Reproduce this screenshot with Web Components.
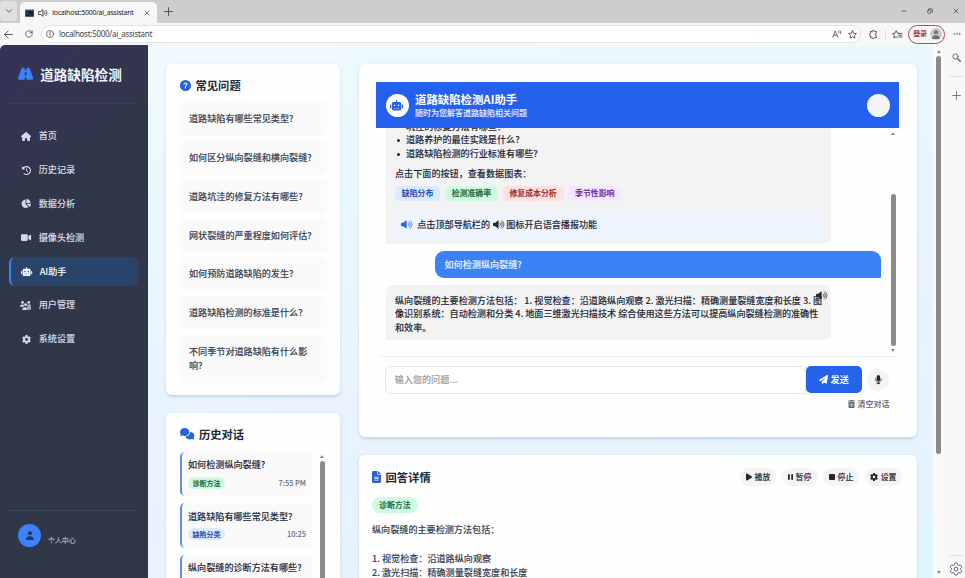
<!DOCTYPE html>
<html lang="zh-CN">
<head>
<meta charset="utf-8">
<title>道路缺陷检测AI助手</title>
<style>
html,body{margin:0;height:100%;overflow:hidden}
body{font:9.1px/13.7px "Noto Sans CJK SC","Noto Sans",sans-serif;font-weight:500;color:#2c313b;background:#f7f7f7;-webkit-text-stroke:.08px}
</style>
</head>
<body>
<app-window></app-window>
<script>
const GEAR='M495.9 166.6c3.2 8.7 .5 18.4-6.4 24.6l-43.3 39.4c1.1 8.3 1.7 16.8 1.7 25.4s-.6 17.1-1.7 25.4l43.3 39.4c6.9 6.2 9.6 15.9 6.4 24.6c-4.4 11.9-9.7 23.3-15.8 34.3l-4.7 8.1c-6.6 11-14 21.4-22.1 31.2c-5.9 7.2-15.7 9.6-24.5 6.8l-55.7-17.7c-13.4 10.3-28.2 18.9-44 25.4l-12.5 57.1c-2 9.1-9 16.3-18.2 17.8c-13.8 2.3-28 3.5-42.5 3.5s-28.7-1.2-42.5-3.5c-9.2-1.5-16.2-8.7-18.2-17.8l-12.5-57.1c-15.8-6.5-30.6-15.1-44-25.4L83.1 425.9c-8.8 2.8-18.6 .3-24.5-6.8c-8.1-9.8-15.5-20.2-22.1-31.2l-4.7-8.1c-6.1-11-11.4-22.4-15.8-34.3c-3.2-8.7-.5-18.4 6.4-24.6l43.3-39.4C64.6 273.1 64 264.6 64 256s.6-17.1 1.7-25.4L22.4 191.2c-6.9-6.2-9.6-15.9-6.4-24.6c4.4-11.9 9.7-23.3 15.8-34.3l4.7-8.1c6.6-11 14-21.4 22.1-31.2c5.9-7.2 15.7-9.6 24.5-6.8l55.7 17.7c13.4-10.3 28.2-18.9 44-25.4l12.5-57.1c2-9.1 9-16.3 18.2-17.8C227.3 1.2 241.5 0 256 0s28.7 1.2 42.5 3.5c9.2 1.5 16.2 8.7 18.2 17.8l12.5 57.1c15.8 6.5 30.6 15.1 44 25.4l55.7-17.7c8.8-2.8 18.6-.3 24.5 6.8c8.1 9.8 15.5 20.2 22.1 31.2l4.7 8.1c6.1 11 11.4 22.4 15.8 34.3zM256 336a80 80 0 1 0 0-160 80 80 0 1 0 0 160z';
/* name: [viewBox width, viewBox height, markup] */
const ICONS={
 road:[576,512,'<path d="M256 32H181.2c-27.1 0-51.3 17.1-60.3 42.6L3.1 407.2C1.1 413 0 419.2 0 425.4C0 455.5 24.5 480 54.6 480H256V416c0-17.7 14.3-32 32-32s32 14.3 32 32v64H521.4c30.2 0 54.6-24.5 54.6-54.6c0-6.2-1.1-12.4-3.1-18.2L455.1 74.6C446 49.1 421.9 32 394.8 32H320V96c0 17.7-14.3 32-32 32s-32-14.3-32-32V32zm64 192v64c0 17.7-14.3 32-32 32s-32-14.3-32-32V224c0-17.7 14.3-32 32-32s32 14.3 32 32z"/>'],
 house:[576,512,'<path d="M575.8 255.5c0 18-15 32.1-32 32.1h-32l.7 160.2c0 2.7-.2 5.4-.5 8.1V472c0 22.1-17.9 40-40 40H456c-1.1 0-2.2 0-3.3-.1c-1.4 .1-2.8 .1-4.2 .1H416 392c-22.1 0-40-17.9-40-40V448 384c0-17.7-14.3-32-32-32H256c-17.7 0-32 14.3-32 32v64 24c0 22.1-17.9 40-40 40H160 128.1c-1.5 0-3-.1-4.5-.2c-1.2 .1-2.4 .2-3.6 .2H104c-22.1 0-40-17.9-40-40V360c0-.9 0-1.9 .1-2.8V287.6H32c-18 0-32-14-32-32.1c0-9 3-17 10-24L266.4 8c7-7 15-8 22-8s15 2 21 7L564.8 231.5c8 7 12 15 11 24z"/>'],
 history:[512,512,'<path d="M75 75L41 41C25.9 25.9 0 36.6 0 57.9V168c0 13.3 10.7 24 24 24H134.1c21.4 0 32.1-25.9 17-41l-30.8-30.8C155 85.5 203 64 256 64c106 0 192 86 192 192s-86 192-192 192c-40.8 0-78.6-12.7-109.7-34.4c-14.5-10.1-34.4-6.6-44.6 7.9s-6.6 34.4 7.9 44.6C151.2 495 201.7 512 256 512c141.4 0 256-114.6 256-256S397.4 0 256 0C185.3 0 121.3 28.7 75 75zm181 53c-13.3 0-24 10.7-24 24V256c0 6.4 2.5 12.5 7 17l72 72c9.4 9.4 24.6 9.4 33.9 0s9.4-24.6 0-33.9l-65-65V152c0-13.3-10.7-24-24-24z"/>'],
 pie:[576,512,'<path d="M304 240V16.6c0-9 7-16.6 16-16.6C443.7 0 544 100.3 544 224c0 9-7.6 16-16.6 16H304zM32 272C32 150.7 122.1 50.3 239 34.3c9.2-1.3 17 6.1 17 15.4V288L412.5 444.5c6.7 6.7 6.2 17.7-1.5 23.1C371.8 495.6 323.8 512 272 512C139.5 512 32 404.6 32 272zm526.4 16c9.3 0 16.6 7.8 15.4 17c-7.7 55.9-34.6 105.6-73.9 142.3c-6 5.6-15.4 5.2-21.2-.7L320 288H558.4z"/>'],
 video:[576,512,'<path d="M0 128C0 92.7 28.7 64 64 64H320c35.3 0 64 28.7 64 64V384c0 35.3-28.7 64-64 64H64c-35.3 0-64-28.7-64-64V128zM559.1 99.8c10.4 5.6 16.9 16.4 16.9 28.2V384c0 11.8-6.5 22.6-16.9 28.2s-23 5-32.9-1.6l-96-64L416 337.1V320 192 174.9l14.2-9.5 96-64c9.8-6.5 22.4-7.2 32.9-1.6z"/>'],
 robot:[640,512,'<path fill-rule="evenodd" d="M320 0c17.7 0 32 14.3 32 32V96H472c39.8 0 72 32.2 72 72V440c0 39.8-32.2 72-72 72H168c-39.8 0-72-32.2-72-72V168c0-39.8 32.2-72 72-72H288V32c0-17.7 14.3-32 32-32zM208 384c-8.8 0-16 7.2-16 16s7.2 16 16 16h32c8.8 0 16-7.2 16-16s-7.2-16-16-16H208zm96 0c-8.8 0-16 7.2-16 16s7.2 16 16 16h32c8.8 0 16-7.2 16-16s-7.2-16-16-16H304zm96 0c-8.8 0-16 7.2-16 16s7.2 16 16 16h32c8.8 0 16-7.2 16-16s-7.2-16-16-16H400zM264 256a40 40 0 1 0 -80 0 40 40 0 1 0 80 0zm152 40a40 40 0 1 0 0-80 40 40 0 1 0 0 80zM48 224H64V416H48c-26.5 0-48-21.5-48-48V272c0-26.5 21.5-48 48-48zm544 0c26.5 0 48 21.5 48 48v96c0 26.5-21.5 48-48 48H576V224h16z"/>'],
 users:[640,512,'<circle cx="144" cy="80" r="78"/><circle cx="500" cy="80" r="78"/><circle cx="320" cy="216" r="84"/><path d="M0 299c0-59 48-107 107-107h42c20 0 38 4 55 12a136 136 0 0 0 45 116H21c-12 0-21-10-21-21zM436 204c17-8 36-12 55-12h42c59 0 107 48 107 99l-60-22-90 0-50 30-12-20c10-24 15-50 8-75zM128 485c0-74 60-133 133-133h100l20 90 40 70H155c-15 0-27-12-27-27z"/><g transform="translate(392 274) scale(.48)"><path fill-rule="evenodd" d="'+GEAR+'"/></g>'],
 gear:[512,512,'<path fill-rule="evenodd" d="'+GEAR+'"/>'],
 user:[448,512,'<circle cx="224" cy="128" r="118"/><path d="M8 482c0-98 80-178 178-178h76c98 0 178 80 178 178 0 16-14 30-30 30H38c-16 0-30-14-30-30z"/>'],
 question:[512,512,'<circle cx="256" cy="256" r="256"/><path d="M185 190c5-35 30-53 73-53 42 0 69 22 69 56 0 46-71 47-71 93" fill="none" stroke="#fff" stroke-width="48" stroke-linecap="round"/><circle cx="256" cy="360" r="32" fill="#fff"/>'],
 comments:[640,512,'<path d="M208 352c115 0 208-79 208-176S323 0 208 0 0 79 0 176c0 38 14 74 39 103-4 15-14 33-30 50-8 9-11 23 1 23 46 0 80-16 105-31 28 20 60 31 93 31z"/><path d="M448 176c0 113-99 199-217 207 24 75 104 129 201 129 34 0 66-7 93-19 25 14 59 19 105 19 12 0 12-14 1-23-16-17-26-35-30-50 25-28 39-65 39-103 0-87-85-159-192-160z"/>'],
 file:[384,512,'<path fill-rule="evenodd" d="M64 0C29 0 0 29 0 64V448c0 35 29 64 64 64H320c35 0 64-29 64-64V160H256c-18 0-32-14-32-32V0zM256 0V128H384zM112 240H272c21 0 21 32 0 32H112c-21 0-21-32 0-32zM112 304H272c21 0 21 32 0 32H112c-21 0-21-32 0-32zM112 368H272c21 0 21 32 0 32H112c-21 0-21-32 0-32z"/>'],
 volume:[640,512,'<path d="M302 35c11 5 18 16 18 29V448c0 13-7 24-18 29s-25 3-35-5L132 352H64c-35 0-64-29-64-64V224c0-35 29-64 64-64h68L267 40c10-8 23-10 35-5z"/><path d="M400 186c41 32 41 108 0 140M460 112c87 70 87 218 0 288M520 37c134 108 134 330 0 438" fill="none" stroke="currentColor" stroke-width="44" stroke-linecap="round"/>'],
 plane:[512,512,'<path d="M498 6c11 7 16 19 14 32l-64 416c-2 20-23 32-44 25L284 430l-68 74c-18 18-56 8-56-22v-84c0-4 2-8 4-11L332 203c10-15-7-27-20-17L106 361 17 317C-4 307-5 278 15 265L463 5c11-7 24-6 35 1z"/>'],
 mic:[384,512,'<rect x="96" width="192" height="352" rx="96"/><path d="M40 216v40c0 84 68 152 152 152s152-68 152-152v-40M192 408v80M120 488h144" fill="none" stroke="currentColor" stroke-width="48" stroke-linecap="round"/>'],
 trash:[448,512,'<path fill-rule="evenodd" d="M135 18c6-11 17-18 29-18h120c12 0 23 7 29 18l7 14h96c43 0 43 64 0 64H32c-43 0-43-64 0-64h96zM32 128H416V448c0 35-29 64-64 64H96c-35 0-64-29-64-64zM120 200V432h28V200zM210 200V432h28V200zM300 200V432h28V200z"/>'],
 play:[384,512,'<path d="M73 39C58 30 40 30 25 38S0 63 0 80V432c0 17 9 34 25 42s33 8 48-1L361 297c14-9 23-24 23-41s-9-32-23-41z"/>'],
 pause:[320,512,'<rect y="64" width="112" height="384" rx="44"/><rect x="208" y="64" width="112" height="384" rx="44"/>'],
 stop:[384,512,'<rect y="64" width="384" height="384" rx="60"/>'],
 down:[16,16,'<path class="l" d="M2.5 5 8 10.5 13.5 5"/>'],
 close:[16,16,'<path class="l" d="M2.5 2.5l11 11m0-11l-11 11"/>'],
 plus:[16,16,'<path class="l" d="M8 1v14M1 8h14"/>'],
 back:[16,16,'<path class="l" d="M15 8H1.5M7.5 1.5 1.2 8l6.3 6.5"/>'],
 reload:[16,16,'<path class="l" d="M14 5.2A6.6 6.6 0 1 0 14.6 8M14.3 1.3v4.2h-4.2"/>'],
 info:[16,16,'<circle class="l" cx="8" cy="8" r="7"/><path class="l" d="M8 7v4.8M8 4v1.2"/>'],
 sound:[20,16,'<path class="l" d="M2 5h3.5L10 1.3v13.4L5.500 11H2zM13 5.500c1.300 1.500 1.300 3.500 0 5M15.500 2.500c3.300 3 3.300 8 0 11"/>'],
 terminal:[16,14,'<path fill="#a3a8af" d="M0 0h16v14H0z"/><path fill="#14223b" d="M.7 2.300h14.600v11H.7z"/><path d="m3 5 2.500 2L3 9M7 10h4" fill="none" stroke="#5d7aa8"/>'],
 aloud:[20,16,'<path class="l" d="M1.500 14.500 6.500 2l5 12.500M3.300 10.300h6.400M12.500 2c1.300 1 1.600 2.700 1.200 4M15.500.8c2 2 2.200 4.200 1.500 6.500"/>'],
 star:[16,16,'<path class="l" d="m8 1.200 2.100 4.500 4.900.6-3.600 3.300 1 4.900L8 12.100l-4.400 2.400 1-4.900L1 6.300l4.900-.6z"/>'],
 favs:[18,16,'<path class="l" d="M11.500 5.800 9.500 5.500 7.300 1.200 5.300 5.500.9 6.200l3.200 3.300-.8 4.800 4-2.200 2.200 1.200M11.500 6h6M11 9.200h6.500M12.500 12.300h5"/>'],
 puzzle:[16,16,'<path class="l" d="M5.500 2.700a2 2 0 0 1 4 0H13v3.300a2 2 0 0 0 0 4v3.300H9.500a2 2 0 0 1-4 0H2.700V10a2 2 0 0 1 0-4V2.700z"/>'],
 min:[16,16,'<path class="l" d="M2 8h12"/>'],
 restore:[16,16,'<rect class="l" x="1.800" y="5" width="9" height="9" rx="2"/><path class="l" d="M5.500 2h6a3 3 0 0 1 3 3v6"/>'],
 dots:[16,16,'<circle cx="2.500" cy="8" r="1.500"/><circle cx="8" cy="8" r="1.500"/><circle cx="13.500" cy="8" r="1.500"/>'],
 search:[16,16,'<circle class="l" cx="6.200" cy="6.200" r="4.800"/><path class="l" d="m9.800 9.800 5 5" style="stroke-width:2.400"/>'],
 cog:[512,512,'<path d="'+GEAR+'" fill="none" stroke="currentColor" stroke-width="38"/>'],
 up:[10,8,'<path d="M5 0l5 8H0z"/>'],
 dn:[10,8,'<path d="M5 8l5-8H0z"/>']
};
function define(name,css,html){
  const t=document.createElement('template');
  customElements.define(name,class extends HTMLElement{
    constructor(){
      super();
      t.innerHTML='<style>*{box-sizing:border-box}'+css+'</style>'+(typeof html==='function'?html(this):html);
      this.attachShadow({mode:'open'}).append(t.content.cloneNode(true));
    }
  });
}
define('x-icon',':host{display:inline-flex;flex:none}svg{display:block;fill:currentColor;overflow:visible}.l{fill:none;stroke:currentColor;stroke-width:var(--sw,1.5);stroke-linecap:round;stroke-linejoin:round}',
 el=>{const [w,h,m]=ICONS[el.getAttribute('name')],s=+el.getAttribute('size')||9;
  return `<svg viewBox="0 0 ${w} ${h}" width="${(s*w/h).toFixed(2)}" height="${s}">${m}</svg>`});

define('scroll-bar',`:host{display:flex;flex-direction:column;align-items:center;width:6px;color:#858585}
 i{display:block;width:var(--w,5px);border-radius:3px;background:#8a8a8a}`,
 el=>`<x-icon name="up" size="3"></x-icon><i style="margin-top:${el.getAttribute('gap')}px;height:${el.getAttribute('thumb')}px"></i>${el.hasAttribute('end')?`<x-icon name="dn" size="3" style="margin-top:${el.getAttribute('end')}px"></x-icon>`:''}`);

define('browser-chrome',`:host{display:block;height:45px;color:#444;-webkit-text-stroke:0}
 .tabs{height:23px;background:#cdcdcd;display:flex;align-items:flex-end}
 .drop{width:17px;height:20px;margin:0 3px 1px 0;background:#e0e0e0;border-radius:4px;display:flex;align-items:center;justify-content:center;align-self:center}
 .tab{width:137px;height:21px;background:#f7f7f7;border-radius:5px 5px 0 0;display:flex;align-items:center;padding:0 7px 0 5px;font:7px/10px "Noto Sans",sans-serif;color:#222}
 .tab span{margin-left:4px;flex:1;white-space:nowrap;letter-spacing:-.24px}
 .tabs>.add{margin:0 0 7px 7px}
 .win{margin-left:auto;display:flex;gap:20px;padding:0 6px 9px 0;color:#222}
 .bar{height:22px;background:#f7f7f7;display:flex;align-items:center;padding-left:4px}
 .addr{width:820px;height:18px;margin-left:8px;border:1px solid #e3e3e3;border-radius:9px;background:#fff;display:flex;align-items:center;padding:0 3px 0 4px;font:8px/12px "Noto Sans",sans-serif;color:#444}
 .addr span{margin-left:5px;flex:1;letter-spacing:-.28px}
 .login{height:19px;width:37px;border:1px solid #b0475c;border-radius:10px;display:flex;align-items:center;justify-content:space-between;padding:0 2px 0 4px;font-size:7px;font-weight:700;color:#b23a55;margin-left:6px}
 .av{width:12px;height:12px;border-radius:50%;background:#c9c9c9;color:#707070;display:flex;justify-content:center;align-items:center}
 .sep{width:1px;height:9px;background:#ddd;margin:0 6px 0 7px}`,
 `<div class="tabs"><div class="drop"><x-icon name="down" size="8"></x-icon></div>
 <div class="tab"><x-icon name="terminal" size="8"></x-icon><x-icon name="sound" size="8" style="margin-left:4px"></x-icon><span>localhost:5000/ai_assistant</span><x-icon name="close" size="6"></x-icon></div>
 <x-icon class="add" name="plus" size="9"></x-icon>
 <div class="win"><x-icon name="min" size="6"></x-icon><x-icon name="restore" size="6"></x-icon><x-icon name="close" size="6"></x-icon></div></div>
 <div class="bar"><x-icon name="back" size="9"></x-icon><x-icon name="reload" size="8" style="margin-left:12px"></x-icon>
 <div class="addr"><x-icon name="info" size="8"></x-icon><span>localhost:5000/ai_assistant</span><x-icon name="aloud" size="8"></x-icon><x-icon name="star" size="9" style="margin-left:6px"></x-icon></div>
 <x-icon name="puzzle" size="9" style="margin-left:8px"></x-icon><div class="sep"></div><x-icon name="favs" size="9"></x-icon>
 <div class="login">登录<div class="av"><x-icon name="user" size="9"></x-icon></div></div><x-icon name="dots" size="8" style="margin-left:8px"></x-icon></div>`);

define('nav-item',`:host{display:flex;align-items:center;height:29px;margin:0 10px 4.800px 9px;padding-left:11.500px;border-radius:6px;color:#d5d9e4}
 :host([active]){background:#2a4369;border-left:2px solid #3b82f6;padding-left:10.500px;color:#f2f6fd}
 .i{width:11px;display:flex;justify-content:center;margin-right:7.200px}`,
 el=>`<div class="i"><x-icon name="${el.getAttribute('icon')}" size="9"></x-icon></div><slot></slot>`);

define('side-nav',`:host{display:flex;flex-direction:column;width:148px;flex:none;background:linear-gradient(145deg,#35325a 0,#33354f 16%,#303749 30%,#303749);border-top-left-radius:5px;font-weight:500}
 .brand{display:flex;align-items:center;gap:7px;height:59px;margin:0 10px;padding-left:8px;border-bottom:1px solid #3c3f58;color:#f2f3f9;font-size:13.600px;line-height:20px;font-weight:700;-webkit-text-stroke:0}
 .brand x-icon{color:#3b82f6}
 nav{padding-top:17.800px}
 .me{margin:auto 10px 0 9px;border-top:1px solid #41485b;height:68px;display:flex;padding:13px 0 0 9px;font-size:6.900px;color:#a6abb9}
 .av{width:23px;height:23px;border-radius:50%;background:#3b82f6;color:#22375f;display:flex;align-items:center;justify-content:center;margin-right:7px}
 .me span{margin-top:10px}`,
 `<div class="brand"><x-icon name="road" size="13.500"></x-icon>道路缺陷检测</div>
 <nav><nav-item icon="house">首页</nav-item><nav-item icon="history">历史记录</nav-item><nav-item icon="pie">数据分析</nav-item><nav-item icon="video">摄像头检测</nav-item><nav-item icon="robot" active>AI助手</nav-item><nav-item icon="users">用户管理</nav-item><nav-item icon="gear">系统设置</nav-item></nav>
 <div class="me"><div class="av"><x-icon name="user" size="9"></x-icon></div><span>个人中心</span></div>`);

define('ui-card',`:host{display:block;background:#fefefe;border-radius:6px;box-shadow:0 1.500px 3px rgba(70,110,140,.22)}`,'<slot></slot>');
define('card-title',`:host{display:flex;align-items:center;height:18px;font-size:11.300px;line-height:18px;font-weight:700;color:#1f2937;-webkit-text-stroke:0}x-icon{color:#2563d8;margin-right:4.500px}`,
 el=>`<x-icon name="${el.getAttribute('icon')}" size="${el.getAttribute('isize')}"></x-icon><slot></slot>`);
define('faq-item',`:host{display:block;padding:10.400px 9px;background:#fafafb;border-radius:5px;margin-bottom:4.400px;color:#374151}`,'<slot></slot>');
define('tag-pill',`:host{display:inline-flex;align-items:center;height:12px;padding:0 4.500px;border-radius:6px;font-size:7px;line-height:10px;background:#dbeafe;color:#1e40af;-webkit-text-stroke:.15px}
 :host([tone=green]){background:#d1fae5;color:#166534}:host([tone=red]){background:#fee2e2;color:#991b1b}:host([tone=purple]){background:#f3e8ff;color:#6b21a8}
 :host([big]){height:15.500px;padding:0 7px;font-size:7.900px;border-radius:8px}
 :host([box]){height:15.500px;padding:0 6.800px;font-size:7.900px;border-radius:4px}`,'<slot></slot>');
define('history-item',`:host{display:block;height:44.500px;padding:6.500px 7px 0 6px;margin-bottom:7.200px;background:#fafafb;border-left:2px solid #5b8fe8;border-radius:5px;color:#1f2937}
 .r{display:flex;justify-content:space-between;align-items:center;margin-top:5px;font-size:7.400px;line-height:12px;color:#6b7280}`,
 el=>'<slot></slot>'+(el.hasAttribute('tag')?`<div class="r"><tag-pill tone="${el.getAttribute('tone')}">${el.getAttribute('tag')}</tag-pill>${el.getAttribute('time')}</div>`:''));

define('chat-header',`:host{display:flex;align-items:center;height:46px;background:#2460ee;padding:0 9.500px;color:#fff;flex:none}
 .c{width:23px;height:23px;border-radius:50%;background:#fff;color:#2563eb;display:flex;align-items:center;justify-content:center}
 .t{flex:1;margin-left:6.500px}.t b{display:block;font-size:11.400px;line-height:15px;-webkit-text-stroke:0}.t span{display:block;font-size:8px;line-height:11px;color:#e3ecff}`,
 `<div class="c"><x-icon name="robot" size="10.500"></x-icon></div><div class="t"><b>道路缺陷检测AI助手</b><span>随时为您解答道路缺陷相关问题</span></div><div class="c" style="background:#f3f4f6"></div>`);
define('chat-message',`:host{display:block;position:relative;width:445px;margin-left:10px;padding:8.300px 9px 5.200px;background:#f3f3f4;border-radius:8px 8px 8px 1px;flex:none;color:#1f2937}
 :host([mine]){width:446px;margin-left:59px;background:#3b82f6;color:#e9f2ff;border-radius:9px 9px 1px 9px;padding:7.200px 9.500px 6.200px}`,'<slot></slot>');
define('welcome-body',`:host{display:block}ul{margin:0 0 6.500px;padding:0;list-style:none}
 li{display:flex;align-items:center}li::before{content:"";width:3px;height:3px;border-radius:50%;background:#1f2937;margin:0 6px 0 2px}
 .b{display:flex;gap:4.700px;margin:4.500px 0 9.500px}
 .n{display:flex;align-items:center;gap:5px;height:28px;padding-left:6px;border-radius:5px;background:#eff5ff}
 .n x-icon{color:#2563eb}.n span x-icon{color:inherit;vertical-align:-1px;margin:0 2.500px}`,
 `<ul><li>坑洼的修复方法有哪些？</li><li>道路养护的最佳实践是什么?</li><li>道路缺陷检测的行业标准有哪些?</li></ul>点击下面的按钮，查看数据图表：
 <div class="b"><tag-pill box>缺陷分布</tag-pill><tag-pill box tone="green">检测准确率</tag-pill><tag-pill box tone="red">修复成本分析</tag-pill><tag-pill box tone="purple">季节性影响</tag-pill></div>
 <div class="n"><x-icon name="volume" size="9"></x-icon><span>点击顶部导航栏的<x-icon name="volume" size="9"></x-icon>图标开启语音播报功能</span></div>`);
define('chat-composer',`:host{display:block;margin:0 4px 0 3px;border-top:1px solid #eeeff1;padding:8.500px 5.500px 0 5.700px;flex:none}
 .r{display:flex;align-items:center}
 .in{width:421px;height:28px;border:1px solid #e5e7eb;border-radius:5px 0 0 5px;padding:6px 9px;color:#9b9da2;background:#fff}
 .send{width:56px;height:27px;border-radius:5px;background:#2563eb;color:#fff;display:flex;align-items:center;justify-content:center;gap:3px;font-weight:700;-webkit-text-stroke:0}
 .mic{width:22px;height:22px;margin-left:5.500px;border-radius:50%;background:#f3f4f6;display:flex;align-items:center;justify-content:center;color:#222}
 .clear{display:flex;justify-content:flex-end;align-items:center;gap:2.500px;font-size:8px;line-height:12px;color:#5f6570;margin-top:4.500px}`,
 `<div class="r"><div class="in">输入您的问题...</div><div class="send"><x-icon name="plane" size="9"></x-icon>发送</div><div class="mic"><x-icon name="mic" size="9"></x-icon></div></div><div class="clear"><x-icon name="trash" size="8"></x-icon>清空对话</div>`);
define('chat-panel',`:host{display:flex;flex-direction:column;height:354.500px;margin:0 18px 0 17px}
 .log{height:228px;display:grid;grid-template-columns:1fr 9px;overflow:hidden}
 .m{height:228px;min-width:0;display:flex;flex-direction:column;justify-content:flex-end;gap:7.200px;padding-bottom:16.200px;overflow:hidden}
 .say{position:absolute;right:4px;top:6px;color:#24272d}`,
 `<chat-header></chat-header><div class="log"><div class="m"><chat-message><welcome-body></welcome-body></chat-message><chat-message mine>如何检测纵向裂缝?</chat-message>
 <chat-message>纵向裂缝的主要检测方法包括： 1. 视觉检查：沿道路纵向观察 2. 激光扫描：精确测量裂缝宽度和长度 3. 图<br>像识别系统：自动检测和分类 4. 地面三维激光扫描技术 综合使用这些方法可以提高纵向裂缝检测的准确性<br>和效率。<x-icon class="say" name="volume" size="9"></x-icon></chat-message></div>
 <scroll-bar gap="59" thumb="152" end="3" style="padding-top:4px"></scroll-bar></div><chat-composer></chat-composer>`);

define('pill-button',`:host{display:flex;align-items:center;justify-content:center;gap:2.500px;min-width:36px;height:18px;padding:0 5.500px;border-radius:9px;background:#f4f4f5;font-size:7.900px;line-height:12px;color:#24272d}`,
 el=>`<x-icon name="${el.getAttribute('icon')}" size="8"></x-icon><slot></slot>`);
define('answer-detail',`:host{display:block;padding:13px 15px 0 13px;color:#374151}
 .h{display:flex;justify-content:space-between;align-items:center}.g{display:flex;gap:5.500px}
 tag-pill{margin-top:11px}p{margin:9px 0 0;line-height:14.600px;white-space:pre-line}`,
 `<div class="h"><card-title icon="file" isize="12">回答详情</card-title><div class="g"><pill-button icon="play">播放</pill-button><pill-button icon="pause">暂停</pill-button><pill-button icon="stop">停止</pill-button><pill-button icon="gear">设置</pill-button></div></div>
 <tag-pill big tone="green">诊断方法</tag-pill><p>纵向裂缝的主要检测方法包括：

1. 视觉检查：沿道路纵向观察
2. 激光扫描：精确测量裂缝宽度和长度</p>`);

define('edge-rail',`:host{display:flex;flex-direction:column;align-items:center;width:22px;background:#f7f7f7;padding:8px 0 3px 4px;color:#5b5870}
 .s{width:15px;height:1px;background:#e2e2e2;margin:14px 0}`,
 `<x-icon name="search" size="9"></x-icon><div class="s"></div><x-icon name="plus" size="9" style="color:#666"></x-icon><div class="s" style="margin:auto 0 7px"></div><x-icon name="cog" size="12"></x-icon>`);

define('app-window',`:host{display:flex;flex-direction:column;width:965px;height:578px;overflow:hidden}
 .body{flex:1;min-height:0;display:flex}
 main{flex:1;min-width:0;display:grid;grid-template-columns:174px 558px;column-gap:19px;padding:19px 0 0 18px;align-content:start;overflow:hidden;background:linear-gradient(165deg,#effafd 0,#e8f8fd 30%,#e9f2fe 60%,#e1f5fd 100%)}
 .col{display:flex;flex-direction:column;min-width:0}
 .faq{height:330.500px;padding:12.300px 13px 0 14px}.faq card-title{margin-bottom:7.200px}
 .his{margin-top:18.500px;height:180px;padding:12px 13px 0 14px}
 .list{display:grid;grid-template-columns:133px 6px;column-gap:6px;margin-top:8.500px}
 .page{width:10px;margin-left:-1px;background:#fafafa;display:flex;justify-content:center;padding:5px 0 0 1px}`,
 `<browser-chrome></browser-chrome><div class="body"><side-nav></side-nav><main>
 <div class="col"><ui-card class="faq"><card-title icon="question" isize="11">常见问题</card-title>
 <faq-item>道路缺陷有哪些常见类型?</faq-item><faq-item>如何区分纵向裂缝和横向裂缝?</faq-item><faq-item>道路坑洼的修复方法有哪些?</faq-item><faq-item>网状裂缝的严重程度如何评估?</faq-item><faq-item>如何预防道路缺陷的发生?</faq-item><faq-item>道路缺陷检测的标准是什么?</faq-item><faq-item>不同季节对道路缺陷有什么影响?</faq-item></ui-card>
 <ui-card class="his"><card-title icon="comments" isize="11.500">历史对话</card-title><div class="list"><div>
 <history-item tag="诊断方法" tone="green" time="7:55 PM">如何检测纵向裂缝?</history-item><history-item tag="缺陷分类" tone="blue" time="10:25">道路缺陷有哪些常见类型?</history-item><history-item>纵向裂缝的诊断方法有哪些?</history-item></div>
 <scroll-bar gap="3" thumb="130" style="padding-top:3px"></scroll-bar></div></ui-card></div>
 <div class="col"><ui-card style="height:372.500px;padding-top:18px"><chat-panel></chat-panel></ui-card><ui-card style="margin-top:18.500px;height:140px"><answer-detail></answer-detail></ui-card></div>
 </main><div class="page"><scroll-bar gap="3" thumb="398" end="117" style="--w:5.500px"></scroll-bar></div><edge-rail></edge-rail></div>`);
</script>
</body>
</html>
